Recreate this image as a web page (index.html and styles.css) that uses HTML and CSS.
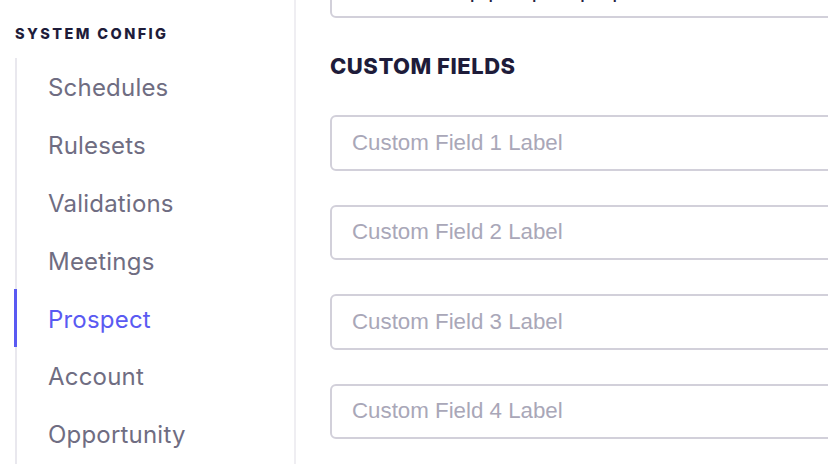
FILE: index.html
```html
<!DOCTYPE html>
<html lang="en">
<head>
<meta charset="utf-8">
<title>System Config</title>
<link rel="stylesheet" href="styles.css">
</head>
<body>
<div class="app">
  <aside class="sidebar">
    <h2 class="side-title">SYSTEM CONFIG</h2>
    <nav class="nav">
      <a class="nav-item">Schedules</a>
      <a class="nav-item">Rulesets</a>
      <a class="nav-item">Validations</a>
      <a class="nav-item">Meetings</a>
      <a class="nav-item active">Prospect</a>
      <a class="nav-item">Account</a>
      <a class="nav-item">Opportunity</a>
    </nav>
  </aside>
  <main class="main">
    <div class="content">
      <input class="field" type="text" value="Show the top prospect properties on the card here">
      <h3 class="section-title">CUSTOM FIELDS</h3>
      <input class="field" type="text" placeholder="Custom Field 1 Label">
      <input class="field" type="text" placeholder="Custom Field 2 Label">
      <input class="field" type="text" placeholder="Custom Field 3 Label">
      <input class="field" type="text" placeholder="Custom Field 4 Label">
    </div>
  </main>
</div>
</body>
</html>
```

FILE: styles.css
```css
* { box-sizing: border-box; }
html, body {
  margin: 0;
  padding: 0;
  background: #ffffff;
  width: 828px;
  height: 464px;
  overflow: hidden;
}
.app {
  display: flex;
  height: 464px;
  font-family: Inter, "Noto Sans", sans-serif;
}
.sidebar {
  width: 296px;
  flex: none;
  border-right: 2px solid #efeef2;
  padding: 26px 0 0 15px;
}
.side-title {
  margin: 0 0 17px 0;
  font-size: 14.5px;
  font-weight: 800;
  letter-spacing: 2.4px;
  color: #1e1c3a;
  line-height: 15px;
}
.nav {
  display: flex;
  flex-direction: column;
  border-left: 2px solid #e9e8ee;
  height: 420px;
}
.nav-item {
  display: flex;
  align-items: center;
  height: 57.8px;
  padding-left: 31px;
  padding-top: 2px;
  margin-left: -2px;
  border-left: 2px solid transparent;
  font-size: 24px;
  color: #6f6d82;
  letter-spacing: 0.2px;
}
.nav-item.active {
  color: #5a5af2;
  border-left: 3px solid #5a5af2;
  margin-left: -3px;
}
.main {
  flex: 1;
  overflow: hidden;
  padding-left: 34px;
}
.content {
  display: flex;
  flex-direction: column;
  width: 600px;
  margin-top: -38px;
}
.field {
  height: 55.5px;
  width: 600px;
  border: 2px solid #d2d0da;
  border-radius: 6px;
  padding: 0 0 0 20px;
  font-family: "Liberation Sans", Arial, sans-serif;
  font-size: 22.3px;
  color: #25233f;
  background: #fff;
  outline: none;
  margin-bottom: 34px;
  flex: none;
}
.field::placeholder {
  color: #a9a7b8;
}
.section-title {
  margin: 0;
  height: 63.5px;
  font-size: 22px;
  font-weight: 800;
  color: #1e1c3a;
  letter-spacing: 0.5px;
  line-height: 28px;
}
```
